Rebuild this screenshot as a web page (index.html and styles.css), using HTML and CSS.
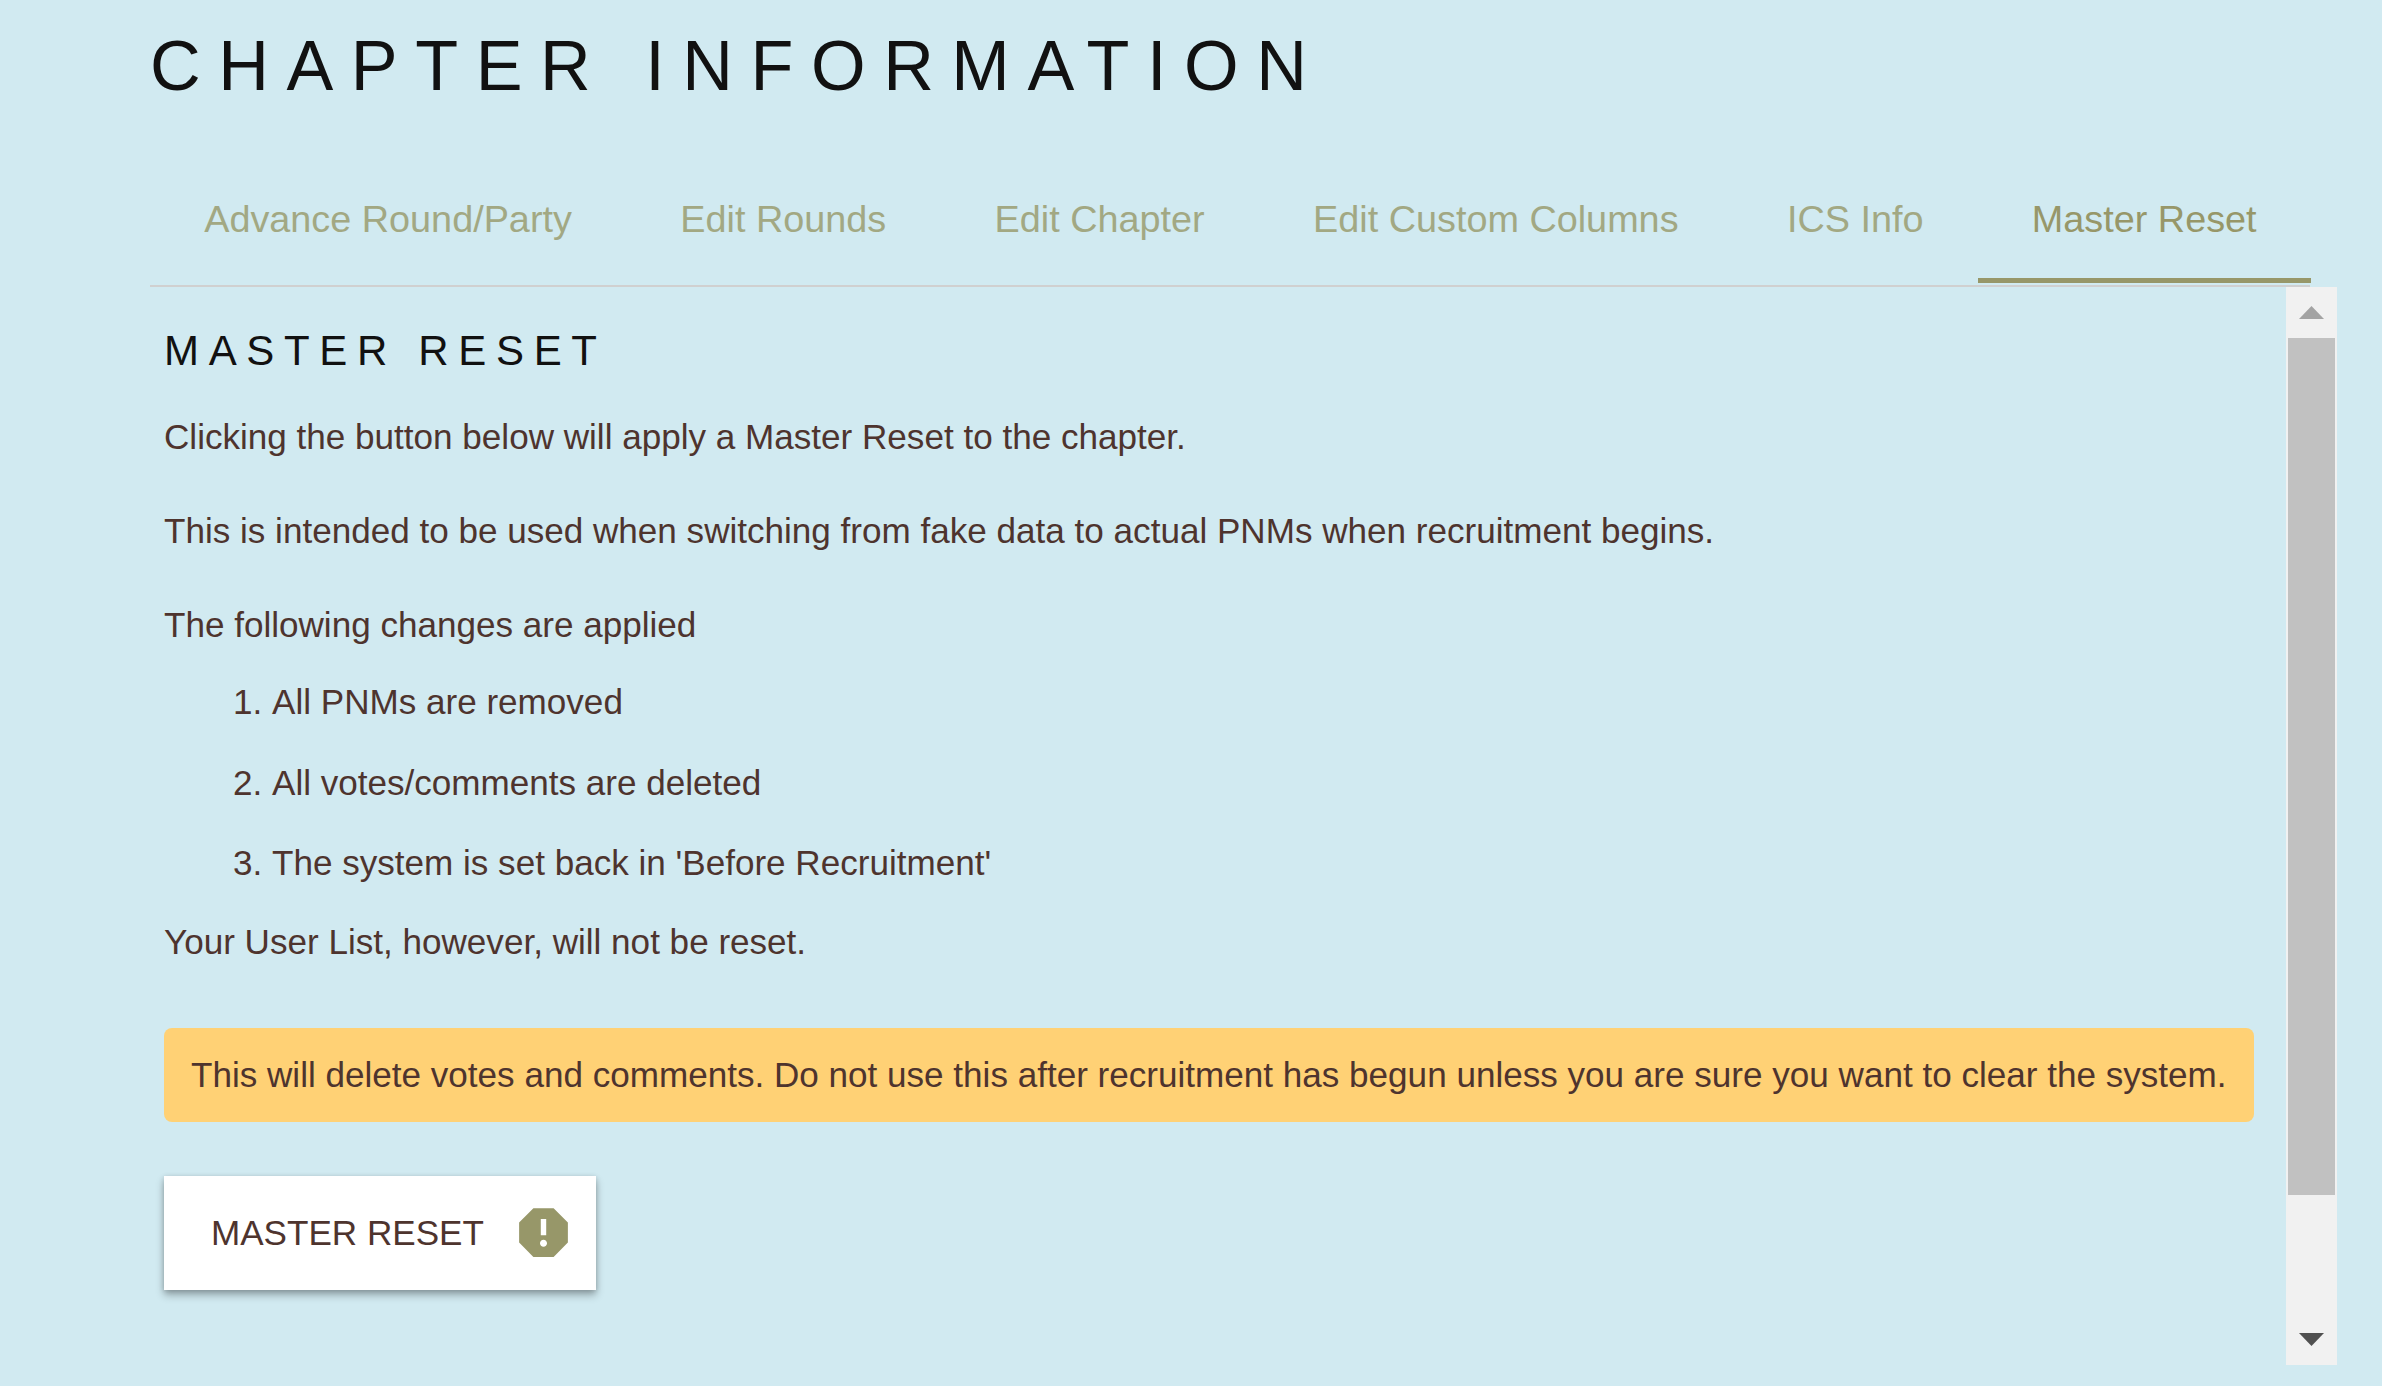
FILE: index.html
```html
<!DOCTYPE html>
<html lang="en">
<head>
	<title>Chapter Information</title>
	<meta charset="utf-8">
	<meta name="viewport" content="width=device-width, initial-scale=1">

	<link rel="stylesheet" href="styles.css">
</head>

<body>
	<div class="page">
		<h1 class="page-title">Chapter Information</h1>

		<div class="tabs">
			<button class="tab">Advance Round/Party</button>
			<button class="tab">Edit Rounds</button>
			<button class="tab">Edit Chapter</button>
			<button class="tab">Edit Custom Columns</button>
			<button class="tab">ICS Info</button>
			<button class="tab active">Master Reset</button>
		</div>

		<div class="panel">
			<div class="panel-content">
				<h2 class="panel-title">Master Reset</h2>
				<p>Clicking the button below will apply a Master Reset to the chapter.</p>
				<p>This is intended to be used when switching from fake data to actual PNMs when recruitment begins.</p>
				<p class="list-intro">The following changes are applied</p>
				<ol class="changes">
					<li>All PNMs are removed</li>
					<li>All votes/comments are deleted</li>
					<li>The system is set back in 'Before Recruitment'</li>
				</ol>
				<p>Your User List, however, will not be reset.</p>
				<div class="warning">This will delete votes and comments. Do not use this after recruitment has begun unless you are sure you want to clear the system.</div>
				<button class="reset-button">
					Master Reset
					<svg class="reset-icon" viewBox="0 0 24 24"><path d="M15.73 3H8.27L3 8.27v7.46L8.27 21h7.46L21 15.73V8.27L15.73 3zM12 17.3c-.72 0-1.3-.58-1.3-1.3 0-.72.58-1.3 1.3-1.3.72 0 1.3.58 1.3 1.3 0 .72-.58 1.3-1.3 1.3zm1-4.3h-2V7h2v6z"/></svg>
				</button>
			</div>

			<div class="scrollbar">
				<div class="scroll-arrow">
					<svg viewBox="0 0 25 13"><path class="arrow-up" d="M12.5 0L25 13H0z"/></svg>
				</div>
				<div class="scroll-thumb"></div>
				<div class="scroll-track"></div>
				<div class="scroll-arrow">
					<svg viewBox="0 0 25 13"><path class="arrow-down" d="M0 0H25L12.5 13z"/></svg>
				</div>
			</div>
		</div>
	</div>
</body>

</html>
```

FILE: styles.css
```css
body {
	margin: 0;
	padding: 0;
	font-family: "Liberation Sans", Arial, sans-serif;
	background: #d1eaf1;
	color: #4e342e;
}
.page {
	height: 1386px;
	overflow: hidden;
	padding: 16px 72px 0 150px;
	box-sizing: border-box;
}
.page-title {
	margin: 0;
	font-size: 70.2px;
	line-height: 100px;
	font-weight: 400;
	letter-spacing: 0.25em;
	text-transform: uppercase;
	color: #111;
}
.tabs {
	display: flex;
	margin-top: 45px;
	height: 124px;
	border-bottom: 2px solid #d0d0d0;
}
.tab {
	flex: none;
	height: 117px;
	padding: 0 54.2px;
	border: 0;
	background: none;
	font-family: inherit;
	font-size: 37.8px;
	white-space: nowrap;
	color: #a2a883;
}
.tab.active {
	color: #979769;
	border-bottom: 5px solid #979769;
	box-sizing: content-box;
}
.panel {
	display: flex;
	height: 1078px;
	margin-right: -27px;
}
.panel-content {
	flex: 1;
	padding: 0 32px 0 14px;
	font-size: 35.1px;
}
.panel-content p {
	margin: 0 0 40px;
	line-height: 54px;
}
.panel-title {
	margin: 36px 0 31px;
	font-size: 42px;
	line-height: 56px;
	font-weight: 400;
	letter-spacing: 0.23em;
	text-transform: uppercase;
	color: #111;
}
.panel-content .list-intro {
	margin-bottom: 0;
}
.changes {
	margin: 10px 0 11px;
	padding: 0 0 0 108px;
}
.changes li {
	line-height: 80.5px;
}
.warning {
	margin-top: 59px;
	padding: 20px 27px;
	border-radius: 8px;
	background: #ffd175;
	line-height: 54px;
}
.reset-button {
	display: flex;
	align-items: center;
	gap: 27px;
	width: 432px;
	height: 114px;
	margin-top: 54px;
	padding: 0 0 0 47px;
	border: 0;
	background: #fff;
	color: #4e342e;
	font-family: inherit;
	font-size: 35.1px;
	text-transform: uppercase;
	box-shadow: 0 5px 8px rgba(0, 0, 0, 0.3), 0 1px 5px rgba(0, 0, 0, 0.15);
}
.reset-icon {
	width: 65px;
	height: 65px;
	fill: #979769;
}
.scrollbar {
	display: flex;
	flex-direction: column;
	width: 51px;
	height: 1078px;
	background: #f1f1f1;
}
.scroll-arrow {
	display: flex;
	align-items: center;
	justify-content: center;
	height: 51px;
}
.scroll-arrow svg {
	width: 25px;
	height: 13px;
}
.arrow-up {
	fill: #a3a3a3;
}
.arrow-down {
	fill: #505050;
}
.scroll-thumb {
	height: 857px;
	margin: 0 2px;
	background: #c1c1c1;
}
.scroll-track {
	flex: 1;
}
```
